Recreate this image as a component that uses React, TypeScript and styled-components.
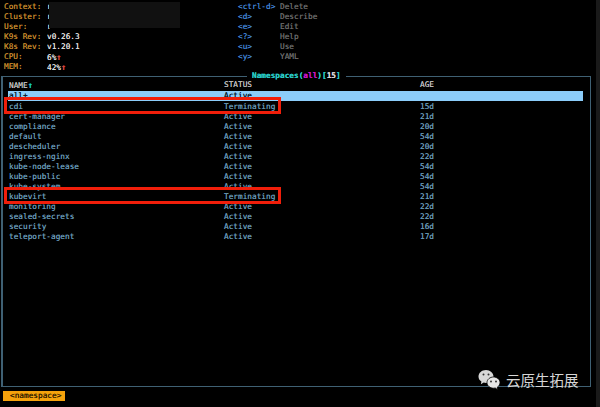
import React from "react";
import styled, { createGlobalStyle } from "styled-components";

const GlobalStyle = createGlobalStyle`
  html, body {
    margin: 0;
    padding: 0;
    background: #000;
  }
`;

const Screen = styled.div`
  position: relative;
  width: 600px;
  height: 407px;
  overflow: hidden;
  background: #000;
  font-family: "DejaVu Sans Mono", monospace;
  font-size: 7.75px;
  line-height: 10px;
  text-shadow: 0 0 0.5px currentColor;
  padding: 2px 8px 0 4px;
  box-sizing: border-box;
  display: flex;
  flex-direction: column;
`;

const EdgeStrip = styled.div`
  position: absolute;
  top: 0;
  right: 0;
  bottom: 0;
  width: 4px;
  background: #1a1a1a;
`;

const Header = styled.div`
  display: flex;
  height: 74px;
`;

const InfoGrid = styled.div`
  width: 234px;
  display: grid;
  grid-template-columns: 43px 1fr;
  grid-auto-rows: 10px;
`;

const InfoLabel = styled.span`
  color: #c08429;
`;

const InfoValue = styled.span`
  color: #dcdcdc;
`;

const UpArrow = styled.span`
  color: #d8463e;
  font-weight: 700;
  font-size: 8.5px;
`;

const HintGrid = styled.div`
  display: grid;
  grid-template-columns: 42px 1fr;
  grid-auto-rows: 10px;
`;

const HintKey = styled.span`
  color: #3f7fd0;
`;

const HintText = styled.span`
  color: #666;
`;

const Redaction = styled.div`
  position: absolute;
  left: 49px;
  top: 2px;
  width: 131px;
  height: 26px;
  background: #111;
`;

const Frame = styled.section`
  position: relative;
  flex: none;
  width: 590px;
  height: 311px;
  box-sizing: border-box;
  margin-left: -3px;
  border: 1px solid #3f6073;
  border-left-width: 2px;
  padding: 3px 7px 0 5px;
`;

const FrameTitle = styled.div`
  position: absolute;
  top: -6px;
  left: 244px;
  padding: 0 5px;
  background: #000;
  color: #28c9c4;
  font-weight: 600;
`;

const TitleAccent = styled.span`
  color: #c616c6;
`;

const TitleCount = styled.span`
  color: #d8d8d8;
`;

const Row = styled.div<{ $selected?: boolean; $head?: boolean }>`
  display: grid;
  grid-template-columns: 215px 196px 1fr;
  height: ${(p) => (p.$head ? 11 : 10)}px;
  margin-bottom: ${(p) => (p.$selected ? 1 : 0)}px;
  padding-left: 1px;
  color: ${(p) => (p.$selected ? "#0a2030" : p.$head ? "#bdbdbd" : "#6595b2")};
  background: ${(p) => (p.$selected ? "#8ccdfa" : "transparent")};
`;

const SortArrow = styled.span`
  color: #14c8c0;
  font-weight: 700;
  font-size: 8.5px;
`;

const Marker = styled.div<{ $top: number }>`
  position: absolute;
  left: 4px;
  top: ${(p) => p.$top}px;
  width: 277px;
  height: 17px;
  box-sizing: border-box;
  border: 3px solid #f01e0a;
`;

const Footer = styled.div`
  display: flex;
  margin: 4px 0 0 -1px;
`;

const Crumb = styled.span`
  background: #f5a20c;
  color: #3a2400;
  padding: 0 4px 0 7px;
  height: 10px;
`;

const Watermark = styled.div`
  position: absolute;
  left: 478px;
  top: 369px;
  display: flex;
  align-items: center;
  gap: 5px;
  color: #d6d6d6;
  text-shadow: none;
  font-family: "Noto Sans CJK SC", sans-serif;
  font-size: 14.5px;
  line-height: 22px;
`;

const info: [string, string, boolean?][] = [
  ["Context:", "r"],
  ["Cluster:", "r"],
  ["User:", "r"],
  ["K9s Rev:", "v0.26.3"],
  ["K8s Rev:", "v1.20.1"],
  ["CPU:", "6%", true],
  ["MEM:", "42%", true],
];

const hints = [
  ["<ctrl-d>", "Delete"],
  ["<d>", "Describe"],
  ["<e>", "Edit"],
  ["<?>", "Help"],
  ["<u>", "Use"],
  ["<y>", "YAML"],
];

const namespaces = [
  ["cdi", "Terminating", "15d"],
  ["cert-manager", "Active", "21d"],
  ["compliance", "Active", "20d"],
  ["default", "Active", "54d"],
  ["descheduler", "Active", "20d"],
  ["ingress-nginx", "Active", "22d"],
  ["kube-node-lease", "Active", "54d"],
  ["kube-public", "Active", "54d"],
  ["kube-system", "Active", "54d"],
  ["kubevirt", "Terminating", "21d"],
  ["monitoring", "Active", "22d"],
  ["sealed-secrets", "Active", "22d"],
  ["security", "Active", "16d"],
  ["teleport-agent", "Active", "17d"],
];

const WeChatLogo = () => (
  <svg width="23" height="22" viewBox="0 0 23 22">
    <path
      d="M8 1C3.8 1 .5 3.9.5 7.500c0 2.100 1.100 3.900 2.900 5.100l-.5 2.600 2.800-1.600c.7.2 1.500.3 2.300.3 4.200 0 7.500-2.900 7.500-6.400S12.200 1 8 1z"
      fill="#d8d8d8"
    />
    <circle cx="5.500" cy="5.500" r="1" fill="#333" />
    <circle cx="10.500" cy="5.500" r="1" fill="#333" />
    <path
      d="M15.500 8c-3.600 0-6.500 2.500-6.500 5.600s2.900 5.600 6.500 5.600c.6 0 1.200-.1 1.800-.2l2.400 1.700-.4-2.500c1.600-1 2.700-2.700 2.700-4.600C22 10.500 19.100 8 15.500 8z"
      fill="#e6e6e6"
      stroke="#000"
      strokeWidth=".8"
    />
    <circle cx="13" cy="12.500" r="1" fill="#333" />
    <circle cx="18" cy="12.500" r="1" fill="#333" />
  </svg>
);

export default function App() {
  return (
    <Screen>
      <GlobalStyle />
      <Header>
        <InfoGrid>
          {info.map(([label, value, up]) => (
            <React.Fragment key={label}>
              <InfoLabel>{label}</InfoLabel>
              <InfoValue>
                {value}
                {up && <UpArrow>↑</UpArrow>}
              </InfoValue>
            </React.Fragment>
          ))}
        </InfoGrid>
        <HintGrid>
          {hints.map(([key, text]) => (
            <React.Fragment key={key}>
              <HintKey>{key}</HintKey>
              <HintText>{text}</HintText>
            </React.Fragment>
          ))}
        </HintGrid>
      </Header>
      <Redaction />
      <Frame>
        <FrameTitle>
          Namespaces(<TitleAccent>all</TitleAccent>)[<TitleCount>15</TitleCount>]
        </FrameTitle>
        <Row $head>
          <span>
            NAME<SortArrow>↑</SortArrow>
          </span>
          <span>STATUS</span>
          <span>AGE</span>
        </Row>
        <Row $selected>
          <span>all+</span>
          <span>Active</span>
          <span />
        </Row>
        {namespaces.map(([name, status, age]) => (
          <Row key={name}>
            <span>{name}</span>
            <span>{status}</span>
            <span>{age}</span>
          </Row>
        ))}
      </Frame>
      <Marker $top={97} />
      <Marker $top={187} />
      <Footer>
        <Crumb>&lt;namespace&gt;</Crumb>
      </Footer>
      <Watermark>
        <WeChatLogo />
        云原生拓展
      </Watermark>
      <EdgeStrip />
    </Screen>
  );
}
